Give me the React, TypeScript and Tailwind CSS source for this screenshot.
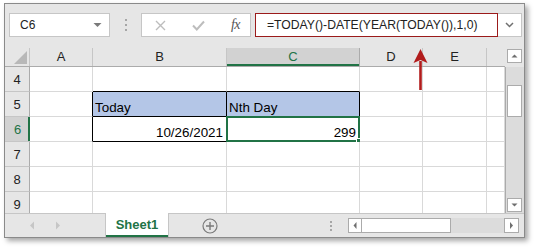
import React from "react";

type Col = { key: string; w: string; label: string };

const cols: Col[] = [
  { key: "A", w: "w-[63px]", label: "A" },
  { key: "B", w: "w-[134px]", label: "B" },
  { key: "C", w: "w-[133px]", label: "C" },
  { key: "D", w: "w-[63px]", label: "D" },
  { key: "E", w: "w-[64px]", label: "E" },
  { key: "F", w: "w-[18px]", label: "" },
];

const rows = [4, 5, 6, 7, 8, 9];

const cells: Record<string, { text: string; align: "left" | "right" }> = {
  B5: { text: "Today", align: "left" },
  C5: { text: "Nth Day", align: "left" },
  B6: { text: "10/26/2021", align: "right" },
  C6: { text: "299", align: "right" },
};

function Cell({ row, col }: { row: number; col: Col }) {
  const id = col.key + row;
  const blackRight = (row === 5 || row === 6) && ["A", "B", "C"].includes(col.key);
  const blackBottom = [4, 5, 6].includes(row) && ["B", "C"].includes(col.key);
  const filled = row === 5 && (col.key === "B" || col.key === "C");
  const data = cells[id];
  return (
    <div
      className={`relative h-[25px] shrink-0 border-r border-b flex items-end pb-[1px] ${col.w} ${
        blackRight ? "border-r-black" : "border-r-[#d9d9d9]"
      } ${blackBottom ? "border-b-black" : "border-b-[#d9d9d9]"} ${filled ? "bg-[#b4c6e7]" : "bg-white"} ${
        data?.align === "right" ? "justify-end pr-[3px]" : "justify-start pl-[2px]"
      }`}
    >
      {data && <span className="text-[13.4px] leading-[15px] text-black whitespace-nowrap">{data.text}</span>}
      {id === "C6" && (
        <>
          <div className="absolute -left-[1px] -top-[1px] -right-[1px] -bottom-[1px] border-2 border-[#217346]" />
          <div className="absolute -right-[3px] -bottom-[3px] w-[6px] h-[6px] bg-[#217346] border border-white" />
        </>
      )}
    </div>
  );
}

function TriBtn({ dir, className }: { dir: "up" | "down" | "left" | "right"; className: string }) {
  const pts = {
    up: "1.5,5.5 4.5,2.5 7.5,5.5",
    down: "1.5,2.5 4.5,5.5 7.5,2.5",
    left: "5.5,1 2.5,4.5 5.5,8",
    right: "3,1 6,4.5 3,8",
  }[dir];
  return (
    <div className={`bg-white border border-[#ababab] flex items-center justify-center ${className}`}>
      <svg width="9" height="9" viewBox="0 0 9 9">
        <polygon points={pts} fill="#6f6f6f" />
      </svg>
    </div>
  );
}

export default function App() {
  return (
    <div className="relative w-[535px] h-[250px] bg-white pl-[4px] pt-[3px] font-['Liberation_Sans',Arial,sans-serif] text-[#222]">
      <div className="w-[521px] h-[235px] border border-[#8a8a8a] bg-[#e6e6e6] shadow-[3px_3px_5px_rgba(0,0,0,0.35)] flex flex-col overflow-hidden">
        {/* formula bar */}
        <div className="h-[44px] shrink-0 flex items-start pt-[9px] pl-[4px]">
          <div className="w-[101px] h-[24px] bg-white border border-[#c6c6c6] flex items-center justify-between pl-[10px] pr-[7px]">
            <span className="text-[12px] text-[#222]">C6</span>
            <svg width="9" height="6" viewBox="0 0 9 6">
              <polygon points="0.5,1 8.5,1 4.5,5" fill="#7a7a7a" />
            </svg>
          </div>
          <div className="w-[31px] h-[24px] flex flex-col items-center justify-center gap-[3px]">
            <div className="w-[2px] h-[2px] bg-[#a6a6a6]" />
            <div className="w-[2px] h-[2px] bg-[#a6a6a6]" />
            <div className="w-[2px] h-[2px] bg-[#a6a6a6]" />
          </div>
          <div className="w-[110px] h-[24px] bg-white border border-[#c6c6c6] flex items-center pl-[13px] pr-[10px] justify-between">
            <svg width="11" height="11" viewBox="0 0 11 11">
              <path d="M1 1 L10 10 M10 1 L1 10" stroke="#bdbdbd" strokeWidth="1.4" />
            </svg>
            <svg width="13" height="11" viewBox="0 0 13 11">
              <path d="M1 5.5 L4.8 9.5 L12 1.5" stroke="#bdbdbd" strokeWidth="2" fill="none" />
            </svg>
            <span className="font-['Liberation_Serif',serif] italic text-[14px] text-[#555] leading-none tracking-[-0.5px]">
              fx
            </span>
          </div>
          <div className="ml-[4px] flex h-[24px]">
            <div className="w-[243px] h-[24px] bg-white border border-[#9b1b1b] flex items-center pl-[11px]">
              <span className="text-[12.2px] text-[#222] whitespace-nowrap">=TODAY()-DATE(YEAR(TODAY()),1,0)</span>
            </div>
            <div className="w-[24px] h-[24px] bg-white border-y border-r border-[#c6c6c6] flex items-center justify-center">
              <svg width="9" height="6" viewBox="0 0 9 6">
                <path d="M1 1 L4.5 4.5 L8 1" stroke="#707070" strokeWidth="1.5" fill="none" />
              </svg>
            </div>
          </div>
        </div>

        {/* grid + vertical scroll */}
        <div className="flex h-[165px] shrink-0">
          <div className="w-[500px] flex flex-col">
            <div className="flex h-[19px] shrink-0 border-b border-[#ababab]">
              <div className="w-[25px] shrink-0 border-r border-[#c6c6c6] flex items-end justify-end pr-[2px] pb-[2px]">
                <svg width="13" height="13" viewBox="0 0 13 13">
                  <polygon points="13,0 13,13 0,13" fill="#b8b8b8" />
                </svg>
              </div>
              {cols.map((c) => (
                <div
                  key={c.key}
                  className={`${c.w} shrink-0 flex items-center justify-center text-[13px] ${
                    c.key === "C"
                      ? "bg-[#d2d2d2] border-r border-[#ababab] text-[#217346] shadow-[inset_0_-2px_0_#217346]"
                      : c.key === "F"
                      ? ""
                      : "border-r border-[#c6c6c6] text-[#222]"
                  }`}
                >
                  {c.label}
                </div>
              ))}
            </div>
            <div className="h-[146px] overflow-hidden bg-white">
              {rows.map((r) => (
                <div key={r} className="flex">
                  <div
                    className={`w-[25px] h-[25px] shrink-0 border-b border-[#c6c6c6] flex items-end justify-center pb-[2px] text-[13px] ${
                      r === 6
                        ? "bg-[#d2d2d2] text-[#217346] shadow-[inset_-2px_0_0_#217346]"
                        : "bg-[#e6e6e6] border-r border-r-[#ababab] text-[#222]"
                    }`}
                  >
                    {r}
                  </div>
                  {cols.map((c) => (
                    <Cell key={c.key} row={r} col={c} />
                  ))}
                </div>
              ))}
            </div>
          </div>
          <div className="w-[19px] shrink-0 flex flex-col border-l border-[#ababab] bg-[#dcdcdc]">
            <div className="h-[19px] bg-[#e6e6e6] flex items-start pl-[2px] pt-[1px] -ml-px">
              <TriBtn dir="up" className="w-[15px] h-[14px]" />
            </div>
            <div className="pl-[2px] pt-[18px] -ml-px">
              <div className="w-[15px] h-[32px] bg-white border border-[#ababab]" />
            </div>
            <div className="flex-1" />
            <div className="pl-[2px] -ml-px pb-[1px]">
              <TriBtn dir="down" className="w-[15px] h-[14px]" />
            </div>
          </div>
        </div>

        {/* sheet tabs */}
        <div className="h-[24px] shrink-0 flex border-t border-[#c6c6c6] bg-[#e6e6e6]">
          <div className="w-[100px] flex items-center pl-[24px] gap-[20px]">
            <svg width="6" height="9" viewBox="0 0 6 9">
              <polygon points="5,0.5 1,4.5 5,8.5" fill="#c6c6c6" />
            </svg>
            <svg width="6" height="9" viewBox="0 0 6 9">
              <polygon points="1,0.5 5,4.5 1,8.5" fill="#c6c6c6" />
            </svg>
          </div>
          <div className="w-[64px] -mt-px bg-white border-x border-[#c6c6c6] flex items-center justify-center shadow-[inset_0_-2px_0_#217346]">
            <span className="text-[13px] font-bold text-[#217346]">Sheet1</span>
          </div>
          <div className="w-[81px] flex items-center justify-center">
            <svg width="16" height="16" viewBox="0 0 16 16">
              <circle cx="8" cy="8" r="7" stroke="#7a7a7a" strokeWidth="1.2" fill="none" />
              <path d="M8 4 V12 M4 8 H12" stroke="#7a7a7a" strokeWidth="1.4" />
            </svg>
          </div>
          <div className="w-[85px] flex flex-col items-end justify-center gap-[2px] pr-[3px]">
            <div className="w-[2px] h-[2px] bg-[#a6a6a6]" />
            <div className="w-[2px] h-[2px] bg-[#a6a6a6]" />
            <div className="w-[2px] h-[2px] bg-[#a6a6a6]" />
          </div>
          <div className="flex items-center ml-[13px] h-full pb-[1px]">
            <TriBtn dir="left" className="w-[14px] h-[15px]" />
            <div className="w-[89px] h-[15px] bg-white border-y border-r border-[#ababab]" />
            <div className="w-[53px] h-[15px] bg-[#dcdcdc]" />
            <TriBtn dir="right" className="w-[15px] h-[15px]" />
          </div>
        </div>
      </div>

      {/* red pointer arrow */}
      <svg className="absolute left-0 top-0 pointer-events-none" width="535" height="250" viewBox="0 0 535 250">
        <path d="M420.5 61 V90" stroke="#b11c1c" strokeWidth="2.6" />
        <polygon points="420.5,49 413.5,63 420.5,60 427.5,63" fill="#b11c1c" />
      </svg>
    </div>
  );
}
